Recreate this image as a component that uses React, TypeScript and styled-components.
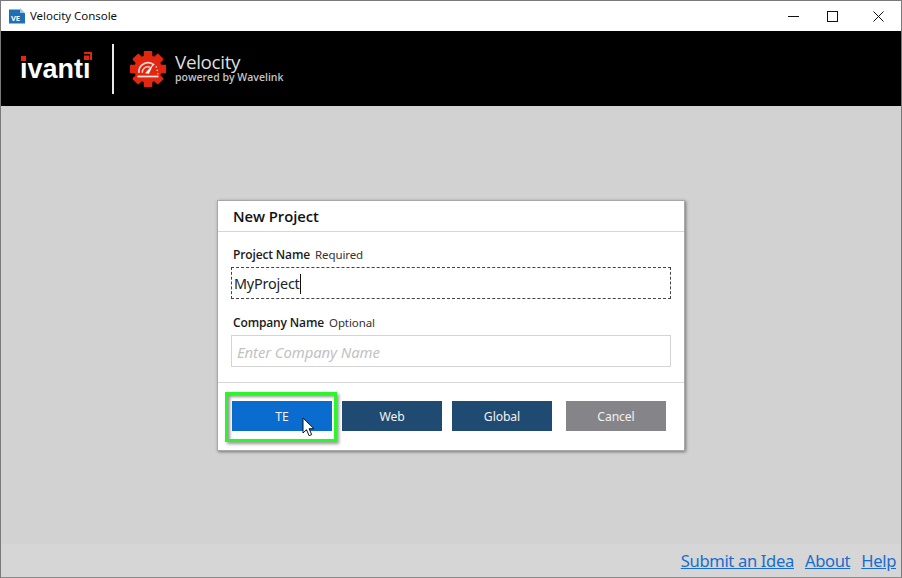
import React from "react";
import styled, { createGlobalStyle } from "styled-components";

const Global = createGlobalStyle`
  html, body { margin: 0; padding: 0; width: 902px; height: 578px; overflow: hidden; }
  body { font-family: "Open Sans", "Noto Sans", sans-serif; }
  * { box-sizing: border-box; }
`;

const Win = styled.div`
  width: 902px; height: 578px; display: flex; flex-direction: column;
  border: 1px solid #7a7a7a; border-bottom-color: #8a8a8a; background: #d2d2d2;
`;
const TitleBar = styled.div`
  height: 30px; flex: none; background: #fff; display: flex; align-items: center; padding-left: 8px;
`;
const AppIcon = styled.svg`display: block; flex: none; margin-top: -1px;`;
const AppTitle = styled.span`
  font-size: 11.5px; color: #111; margin: -1px 0 0 5px; font-family: "Noto Sans", sans-serif; flex: 1; letter-spacing: -0.05px;
`;
const WinBtn = styled.div<{ $w: number }>`
  width: ${p => p.$w}px; height: 30px; display: flex; align-items: center; justify-content: center;
`;
const WinBtns = styled.div`display: flex;`;
const Header = styled.div`
  height: 75px; flex: none; background: #000; display: flex; align-items: center; padding-left: 19px;
`;
const Ivanti = styled.div`
  position: relative; width: 71px; height: 30px; margin-top: -3px;
`;
const IvantiText = styled.span`
  position: absolute; left: 0; top: -1px; color: #fff; font: 700 27px/36px "Liberation Sans", sans-serif;
`;
const IvantiMarks = styled.svg`position: absolute; left: 0; top: 0;`;
const Sep = styled.div`width: 2px; height: 50px; background: #e8e8e8; margin: 0 15px 0 21px;`;
const Brand = styled.div`display: flex; flex-direction: column; margin-left: 8px; margin-top: -2px;`;
const BrandName = styled.span`color: #ddd; font: 400 18.9px/20px "Open Sans", sans-serif; letter-spacing: -0.35px;`;
const BrandSub = styled.span`color: #c4c4c4; font: 600 10.5px/11px "Open Sans", sans-serif;`;
const Main = styled.div`flex: 1; display: flex; align-items: center; justify-content: center; background: #d2d2d2;`;
const Dialog = styled.div`
  width: 468px; height: 251px; background: #fff; border: 1px solid #a8a8a8;
  box-shadow: 1px 1px 3px rgba(0,0,0,.45); display: flex; flex-direction: column;
`;
const DialogTitle = styled.div`
  height: 31px; flex: none; border-bottom: 1px solid #d6d6d6; padding-left: 15px;
  font: 600 14.8px/31px "Open Sans", sans-serif; color: #111; letter-spacing: -0.05px;
`;
const Form = styled.div`padding: 13px 13px 0 13px; height: 151px; flex: none; border-bottom: 1px solid #d6d6d6;`;
const Field = styled.div`height: 68px; display: flex; flex-direction: column;`;
const LabelRow = styled.div`height: 20px; display: flex; align-items: center; gap: 5px; padding-left: 2px;`;
const Label = styled.span`font: 600 12px/16px "Open Sans", sans-serif; color: #1a1a1a; letter-spacing: -0.14px;`;
const Hint = styled.span`font: 400 11.5px/16px "Noto Sans", sans-serif; color: #333; letter-spacing: -0.1px;`;
const InputBox = styled.div<{ $focus?: boolean }>`
  height: 32px; width: 440px; display: flex; align-items: center; margin-top: 2px;
  border: 1px ${p => (p.$focus ? "dashed #444" : "solid #d4d4d4")};
  padding: 2px 0 0 ${p => (p.$focus ? 2 : 5)}px;
`;
const Value = styled.span`
  font: 400 14.4px/20px "Noto Sans", sans-serif; color: #222; border-right: 1px solid #111; letter-spacing: -0.2px;
`;
const Placeholder = styled.span`
  font: italic 400 14.9px/20px "Noto Sans", sans-serif; color: #c2c2c2; letter-spacing: -0.1px;
`;
const Actions = styled.div`position: relative; display: flex; padding: 18px 0 0 14px; gap: 10px;`;
const Btn = styled.button<{ $bg: string; $gapLeft?: number }>`
  width: 100px; height: 30px; border: 0; padding: 2px 0 0; background: ${p => p.$bg}; color: #f2f2f2;
  font: 400 12.2px/28px "Noto Sans", sans-serif; letter-spacing: -0.1px;
  margin-left: ${p => p.$gapLeft ?? 0}px;
`;
const Highlight = styled.div`
  position: absolute; left: 7px; top: 9px; width: 112px; height: 50px;
  border: 3px solid #2cf52c;
  box-shadow: 2px 2px 3px rgba(0,0,0,.4), inset 2px 2px 3px rgba(0,0,0,.4);
  pointer-events: none;
`;
const Cursor = styled.svg`position: absolute; left: 84px; top: 34px;`;
const Footer = styled.div`
  height: 33px; flex: none; background: #d6d6d6; display: flex; justify-content: flex-end; align-items: center;
  gap: 11px; padding: 0 5px 0 0;
`;
const FootLink = styled.a`
  font: 400 16.6px/22px "Noto Sans", sans-serif; color: #1a6ccc; text-decoration: underline; letter-spacing: -0.35px;
`;
const Icon = styled.svg`display: block; flex: none;`;

const Gear = () => {
  const teeth = Array.from({ length: 8 }, (_, i) => i * 45);
  return (
    <Icon width="38" height="38" viewBox="0 0 40 40">
      {teeth.map(a => (
        <rect key={a} x="15.5" y="1" width="9" height="9" rx="1" fill="#e3260f" transform={`rotate(${a} 20 20)`} />
      ))}
      <circle cx="20" cy="20" r="14.5" fill="#e3260f" />
      <path d="M10.5 24a9.5 9.5 0 0 1 16-8" fill="none" stroke="#f4d9d4" strokeWidth="1.8" />
      <path d="M14 24a6 6 0 0 1 8-6" fill="none" stroke="#f4d9d4" strokeWidth="1.5" />
      <path d="M17 24.5L26.5 13.5L21 25Z" fill="#fff" />
      <path d="M28 18l1.5-.5M29 21.5h1.5M29.5 25h1.5" stroke="#f4d9d4" strokeWidth="1.3" />
      <rect x="9" y="27" width="22" height="1.8" fill="#f7e3e0" />
    </Icon>
  );
};

export default function App() {
  return (
    <>
      <Global />
      <Win>
        <TitleBar>
          <AppIcon width="16" height="16" viewBox="0 0 16 16">
            <path d="M0 1.5h11l5 4v10H0z" fill="#1f6fb5" />
            <path d="M11 0l5 5h-5z" fill="#9cc7ea" />
            <text x="2" y="12.5" fontSize="7.5" fontWeight="700" fill="#fff" fontFamily="Open Sans">VE</text>
          </AppIcon>
          <AppTitle>Velocity Console</AppTitle>
          <WinBtns>
            <WinBtn $w={32}>
              <Icon width="11" height="11" viewBox="0 0 11 11"><path d="M0 5.5h11" stroke="#111" strokeWidth="1" /></Icon>
            </WinBtn>
            <WinBtn $w={46}>
              <Icon width="11" height="11" viewBox="0 0 11 11"><rect x=".5" y=".5" width="10" height="10" fill="none" stroke="#111" /></Icon>
            </WinBtn>
            <WinBtn $w={46}>
              <Icon width="11" height="11" viewBox="0 0 11 11"><path d="M.5.5l10 10M10.5.5l-10 10" stroke="#111" strokeWidth="1" /></Icon>
            </WinBtn>
          </WinBtns>
        </TitleBar>
        <Header>
          <Ivanti>
            <IvantiText>ivanti</IvantiText>
            <IvantiMarks width="72" height="30" viewBox="0 0 72 30">
              <rect x="0" y="3" width="9" height="8" fill="#000" />
              <rect x="1" y="4" width="5" height="5" fill="#e3260f" />
              <rect x="63" y="3" width="8" height="8" fill="#000" />
              <path d="M64 0h8v8h-2V2h-6z" fill="#e3260f" />
              <rect x="64" y="3.5" width="5" height="4.5" fill="#e3260f" />
            </IvantiMarks>
          </Ivanti>
          <Sep />
          <Gear />
          <Brand>
            <BrandName>Velocity</BrandName>
            <BrandSub>powered by Wavelink</BrandSub>
          </Brand>
        </Header>
        <Main>
          <Dialog>
            <DialogTitle>New Project</DialogTitle>
            <Form>
              <Field>
                <LabelRow><Label>Project Name</Label><Hint>Required</Hint></LabelRow>
                <InputBox $focus><Value>MyProject</Value></InputBox>
              </Field>
              <Field>
                <LabelRow><Label>Company Name</Label><Hint>Optional</Hint></LabelRow>
                <InputBox><Placeholder>Enter Company Name</Placeholder></InputBox>
              </Field>
            </Form>
            <Actions>
              <Btn $bg="#0a6ccf">TE</Btn>
              <Btn $bg="#1f4b72">Web</Btn>
              <Btn $bg="#1f4b72">Global</Btn>
              <Btn $bg="#858589" $gapLeft={4}>Cancel</Btn>
              <Highlight />
              <Cursor width="13" height="20" viewBox="0 0 13 20">
                <path d="M1 1v15l3.5-3.3 2.6 6 2.6-1.1-2.6-5.9H12z" fill="#fff" stroke="#111" strokeWidth="1" strokeLinejoin="round" />
              </Cursor>
            </Actions>
          </Dialog>
        </Main>
        <Footer>
          <FootLink>Submit an Idea</FootLink>
          <FootLink>About</FootLink>
          <FootLink>Help</FootLink>
        </Footer>
      </Win>
    </>
  );
}
